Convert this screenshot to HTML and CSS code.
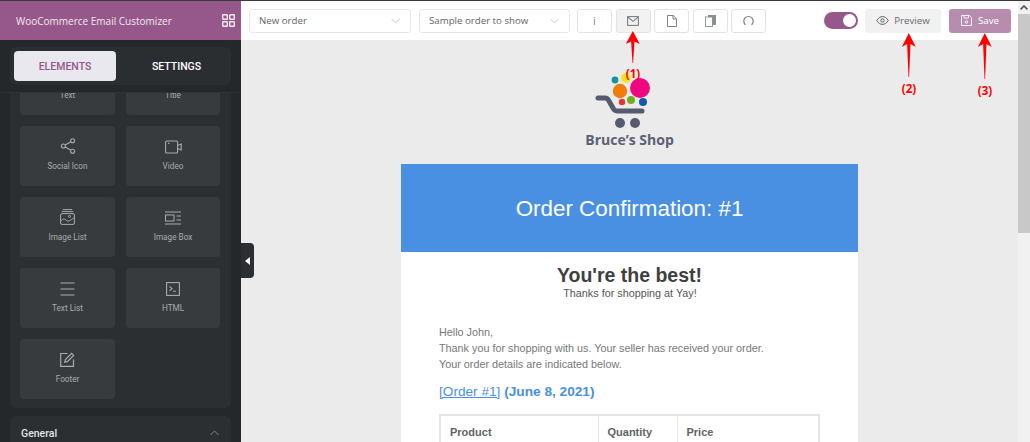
FILE: index.html
```html
<!DOCTYPE html>
<html lang="en">
<head>
  <meta charset="UTF-8">
  <title>WooCommerce Email Customizer</title>
  <link rel="stylesheet" href="styles.css">
</head>
<body>
  <div class="app">
    <aside class="sidebar">
      <div class="brand">
        <span>WooCommerce Email Customizer</span>
        <svg class="brand-icon" width="13" height="13" viewBox="0 0 13 13" fill="none" stroke="#f2e8f0" stroke-width="1.4"><rect x="0.7" y="0.7" width="4.6" height="4.6" rx="0.6"/><rect x="7.7" y="0.7" width="4.6" height="4.6" rx="0.6"/><rect x="0.7" y="7.7" width="4.6" height="4.6" rx="0.6"/><rect x="7.7" y="7.7" width="4.6" height="4.6" rx="0.6"/></svg>
      </div>
      <div class="tabbar">
        <div class="tabs">
          <div class="tab active">ELEMENTS</div>
          <div class="tab">SETTINGS</div>
        </div>
      </div>
      <div class="side-scroll">
        <div class="panel">
          <div class="card"><span>Text</span></div>
          <div class="card"><span>Title</span></div>
          <div class="card">
            <svg width="16" height="16" viewBox="0 0 16 16" fill="none" stroke="#a9abac" stroke-width="1.1"><circle cx="3.4" cy="8" r="2"/><circle cx="12.6" cy="2.8" r="2"/><circle cx="12.6" cy="13.2" r="2"/><path d="M5.2 7 10.8 3.8M5.2 9l5.6 3.2"/></svg>
            <span>Social Icon</span>
          </div>
          <div class="card">
            <svg width="17" height="14" viewBox="0 0 17 14" fill="none" stroke="#a9abac" stroke-width="1.1"><rect x="0.6" y="1" width="12" height="12" rx="1"/><path d="M12.6 5.5 16.2 4v6l-3.6-1.5"/><path d="M3 3.4h1.4"/></svg>
            <span>Video</span>
          </div>
          <div class="card">
            <svg width="15" height="16" viewBox="0 0 15 16" fill="none" stroke="#a9abac" stroke-width="1"><path d="M2.8 0.6h9.4M1.8 2.6h11.4"/><rect x="0.6" y="4.6" width="13.8" height="10.8" rx="1.4"/><path d="M0.8 12c2-2.4 3.6-2.4 5.4-0.8s3.6 0.8 8-2.6"/><circle cx="9.5" cy="7.4" r="1"/></svg>
            <span>Image List</span>
          </div>
          <div class="card">
            <svg width="16" height="14" viewBox="0 0 16 14" fill="none" stroke="#a9abac" stroke-width="1"><path d="M0 1h16M0 13h16M11.5 5h4.5M11.5 9h4.5"/><rect x="0.5" y="4" width="8.5" height="6"/></svg>
            <span>Image Box</span>
          </div>
          <div class="card">
            <svg width="15" height="14" viewBox="0 0 15 14" fill="none" stroke="#a9abac" stroke-width="1.2"><path d="M0.5 1h14M0.5 7h14M0.5 13h14"/></svg>
            <span>Text List</span>
          </div>
          <div class="card">
            <svg width="14" height="14" viewBox="0 0 14 14" fill="none" stroke="#a9abac" stroke-width="1.1"><rect x="0.6" y="0.6" width="12.8" height="12.8"/><path d="M3.5 4.5 6 6.7 3.5 8.9M7 9.3h3"/></svg>
            <span>HTML</span>
          </div>
          <div class="card">
            <svg width="15" height="15" viewBox="0 0 15 15" fill="none" stroke="#a9abac" stroke-width="1.2"><path d="M7.5 1.5H0.7v12.8h12.8V7.5"/><path d="M4.8 10.2 5.4 7.6 11.6 1.4 13.6 3.4 7.4 9.6Z"/></svg>
            <span>Footer</span>
          </div>
        </div>
        <div class="panel-head">
          <span>General</span>
          <svg width="9" height="6" viewBox="0 0 9 6" fill="none" stroke="#85888a" stroke-width="1"><path d="M0.5 5 4.5 1l4 4"/></svg>
        </div>
      </div>
    </aside>

    <main class="main">
      <header class="topbar">
        <div class="select select-event">
          <span>New order</span>
          <svg width="9" height="6" viewBox="0 0 9 6" fill="none" stroke="#c4c6c8" stroke-width="1"><path d="M0.5 1 4.5 5l4-4"/></svg>
        </div>
        <div class="select select-sample">
          <span>Sample order to show</span>
          <svg width="9" height="6" viewBox="0 0 9 6" fill="none" stroke="#c4c6c8" stroke-width="1"><path d="M0.5 1 4.5 5l4-4"/></svg>
        </div>
        <div class="tools">
          <div class="tool"><span class="tool-i">i</span></div>
          <div class="tool tool-on">
            <svg width="12" height="10" viewBox="0 0 12 10" fill="none" stroke="#7d8185" stroke-width="1.1"><rect x="0.6" y="0.6" width="10.8" height="8.8"/><path d="M0.8 1 6 5.4 11.2 1"/></svg>
          </div>
          <div class="tool">
            <svg width="10" height="12" viewBox="0 0 10 12" fill="none" stroke="#7d8185" stroke-width="1"><path d="M0.5 0.5h5.7l3.3 3.3v7.7h-9zM6 0.5v3.5h3.5"/></svg>
          </div>
          <div class="tool">
            <svg width="11" height="12" viewBox="0 0 11 12" fill="#8b8e91" stroke="#7d8185" stroke-width="0.8"><rect x="3.5" y="0.5" width="7" height="9"/><rect x="0.5" y="2" width="7" height="9.5" fill="#fff"/></svg>
          </div>
          <div class="tool">
            <svg width="11" height="11" viewBox="0 0 11 11" fill="none" stroke="#7d8185" stroke-width="1.2"><path d="M2.5 9.8A4.7 4.7 0 1 1 8.5 9.8"/></svg>
          </div>
        </div>
        <div class="actions">
          <div class="toggle"><span class="knob"></span></div>
          <div class="btn btn-preview">
            <svg width="13" height="9" viewBox="0 0 13 9" fill="none" stroke="#5f6367" stroke-width="1"><path d="M0.7 4.5C2.5 1.7 4.4 0.6 6.5 0.6s4 1.1 5.8 3.9c-1.8 2.8-3.7 3.9-5.8 3.9S2.5 7.3 0.7 4.5Z"/><circle cx="6.5" cy="4.5" r="1.7"/></svg>
            <span>Preview</span>
          </div>
          <div class="btn btn-save">
            <svg width="11" height="11" viewBox="0 0 11 11" fill="none" stroke="#fff" stroke-width="0.9"><path d="M0.5 0.5h8l2 2v8h-10z"/><path d="M3 0.5v2.5h4.5V0.5"/><circle cx="5.5" cy="7" r="1.3"/></svg>
            <span>Save</span>
          </div>
        </div>
      </header>

      <div class="canvas">
        <div class="logo">
          <svg width="62" height="60" viewBox="0 0 62 60">
            <circle cx="21" cy="9" r="3.4" fill="#14969e"/>
            <circle cx="32" cy="7" r="5" fill="#f7e21f"/>
            <circle cx="26" cy="20" r="7.2" fill="#f07d0a"/>
            <circle cx="46" cy="17" r="10" fill="#f0067e"/>
            <circle cx="28" cy="31" r="3.2" fill="#e8352f"/>
            <circle cx="37" cy="29" r="4" fill="#6fae1f"/>
            <circle cx="49" cy="31" r="4" fill="#1359a8"/>
            <path d="M4 27h7c2 0 3 1 4 3l4 7c1 2 2 3 4 3h25" fill="none" stroke="#565a6e" stroke-width="5" stroke-linecap="round" stroke-linejoin="round"/>
            <circle cx="26" cy="52" r="5" fill="#565a6e"/>
            <circle cx="41" cy="52" r="5" fill="#565a6e"/>
          </svg>
          <div class="logo-name">Bruce’s Shop</div>
        </div>

        <div class="email">
          <div class="email-head">Order Confirmation: #1</div>
          <div class="thanks">
            <h1>You're the best!</h1>
            <p>Thanks for shopping at Yay!</p>
          </div>
          <div class="email-body">
            <p>Hello John,<br>Thank you for shopping with us. Your seller has received your order.<br>Your order details are indicated below.</p>
            <h2><a href="#">[Order #1]</a> (June 8, 2021)</h2>
            <table class="order-table">
              <tr><th class="col-product">Product</th><th class="col-qty">Quantity</th><th>Price</th></tr>
            </table>
          </div>
        </div>
      </div>
    </main>

    <div class="scrollbar">
      <div class="scroll-up"><svg width="8" height="5" viewBox="0 0 8 5" fill="none" stroke="#505050" stroke-width="1.6"><path d="M0.6 4.4 4 1l3.4 3.4"/></svg></div>
      <div class="scroll-thumb"></div>
    </div>

    <div class="collapse"><span class="collapse-arrow"></span></div>

    <div class="mark mark-1">
      <svg width="14" height="32" viewBox="0 0 14 32"><path d="M7 0 14 13 8.7 10.5 7.3 32H6.7L5.3 10.5 0 13Z" fill="#f00"/></svg>
      <span>(1)</span>
    </div>
    <div class="mark mark-2">
      <svg width="14" height="44" viewBox="0 0 14 44"><path d="M7 0 14 14 8.7 11 7.3 44H6.7L5.3 11 0 14Z" fill="#f00"/></svg>
      <span>(2)</span>
    </div>
    <div class="mark mark-3">
      <svg width="14" height="46" viewBox="0 0 14 46"><path d="M7 0 14 14 8.7 11 7.3 46H6.7L5.3 11 0 14Z" fill="#f00"/></svg>
      <span>(3)</span>
    </div>
  </div>
</body>
</html>
```

FILE: styles.css
```css
* {
  box-sizing: border-box;
}

body {
  margin: 0;
  font-family: 'Roboto', sans-serif;
  overflow: hidden;
}

.app {
  position: relative;
  display: flex;
  width: 1030px;
  height: 442px;
  border-top: 1px solid #3a3a3a;
  overflow: hidden;
  background: #ebebeb;
}

/* sidebar */
.sidebar {
  width: 241px;
  flex-shrink: 0;
  display: flex;
  flex-direction: column;
  background: #24282b;
  overflow: hidden;
}

.brand {
  height: 39px;
  flex-shrink: 0;
  display: flex;
  align-items: center;
  justify-content: space-between;
  padding: 0 6px 0 16px;
  background: #96588a;
  color: #f2e8f0;
  font-family: 'Open Sans', sans-serif;
  font-size: 10px;
}

.tabbar {
  height: 53px;
  flex-shrink: 0;
  padding: 7px 10px 0;
  background: #24282b;
  border-bottom: 1px solid #2f3336;
}

.tabs {
  display: flex;
  height: 38px;
  padding: 4px;
  background: #2b2e31;
  border-radius: 6px;
}

.tab {
  flex: 1;
  display: flex;
  align-items: center;
  justify-content: center;
  padding-left: 10px;
  color: #fff;
  font-size: 10.5px;
  font-weight: 500;
}

.tab.active {
  flex: 0 0 102px;
  height: 30px;
  padding-left: 0;
  background: #e8e8ee;
  border-radius: 4px;
  color: #96588a;
}

.side-scroll {
  flex: 1;
  padding: 0 10px;
  overflow: hidden;
}

.panel {
  display: grid;
  grid-template-columns: 95px 94px;
  grid-auto-rows: 60px;
  gap: 11px;
  margin-top: -38px;
  padding: 0 10px 9px;
  background: #2c2f31;
  border-radius: 6px;
}

.card {
  display: flex;
  flex-direction: column;
  align-items: center;
  justify-content: flex-end;
  gap: 7px;
  padding-bottom: 15px;
  background: #383b3d;
  border-radius: 4px;
  color: #a9abac;
  font-size: 8.2px;
  line-height: 10px;
}

.panel-head {
  display: flex;
  align-items: flex-start;
  justify-content: space-between;
  height: 40px;
  margin-top: 8px;
  padding: 11px 12px 0 11px;
  background: #2c2f31;
  border-radius: 6px 6px 0 0;
  color: #e4e5e6;
  font-size: 10.5px;
  font-weight: 500;
}

.panel-head svg {
  margin-top: 3px;
}

.collapse {
  position: absolute;
  left: 241px;
  top: 242px;
  width: 13px;
  height: 35px;
  display: flex;
  align-items: center;
  justify-content: center;
  background: #2c2f31;
  border-radius: 0 4px 4px 0;
}

.collapse-arrow {
  width: 0;
  height: 0;
  border-top: 4px solid transparent;
  border-bottom: 4px solid transparent;
  border-right: 5px solid #fff;
}

/* top bar */
.main {
  flex: 1;
  display: flex;
  flex-direction: column;
  min-width: 0;
}

.topbar {
  height: 39px;
  flex-shrink: 0;
  display: flex;
  align-items: center;
  padding: 0 7px 0 8px;
  background: #fff;
  font-family: 'Open Sans', sans-serif;
  font-size: 9.7px;
  color: #5f6367;
}

.select {
  display: flex;
  align-items: center;
  justify-content: space-between;
  height: 24px;
  margin-right: 8px;
  padding: 0 10px 0 9px;
  border: 1px solid #e6e7e9;
  border-radius: 3px;
}

.select-event {
  width: 162px;
}

.select-sample {
  width: 151px;
  margin-right: 7px;
}

.tools {
  display: flex;
  gap: 3.5px;
}

.tool {
  width: 35px;
  height: 24px;
  display: flex;
  align-items: center;
  justify-content: center;
  border: 1px solid #e2e3e5;
  border-radius: 3px;
}

.tool-on {
  background: #f2f2f2;
}

.tool-i {
  color: #7d8185;
  font-size: 11px;
}

.actions {
  display: flex;
  align-items: center;
  margin-left: auto;
}

.toggle {
  width: 34px;
  height: 17px;
  margin-right: 7px;
  padding: 2px;
  display: flex;
  justify-content: flex-end;
  background: #96588a;
  border-radius: 9px;
}

.knob {
  width: 13px;
  height: 13px;
  background: #fff;
  border-radius: 50%;
}

.btn {
  display: flex;
  align-items: center;
  justify-content: center;
  gap: 5px;
  height: 24px;
  border-radius: 3px;
}

.btn-preview {
  width: 76px;
  margin-right: 8px;
  background: #f1f1f1;
  color: #66696d;
}

.btn-save {
  width: 62px;
  background: #b88cae;
  color: #fff;
  gap: 6px;
}

/* email preview */
.canvas {
  flex: 1;
  display: flex;
  flex-direction: column;
  align-items: center;
  background: #ebebeb;
}

.logo {
  height: 124px;
  display: flex;
  flex-direction: column;
  align-items: center;
  padding-top: 31px;
}

.logo svg {
  display: block;
  margin-left: -8px;
}

.logo-name {
  color: #5c6075;
  font-family: 'Open Sans', sans-serif;
  font-size: 14px;
  font-weight: 700;
  line-height: 17px;
}

.email {
  width: 457px;
  flex: 1;
  background: #fff;
  font-family: 'Liberation Sans', sans-serif;
}

.email-head {
  height: 88px;
  display: flex;
  align-items: center;
  justify-content: center;
  padding-top: 2px;
  background: #4a90e2;
  color: #fff;
  font-size: 22.4px;
}

.thanks {
  padding-top: 12px;
  text-align: center;
}

.thanks h1 {
  margin: 0;
  color: #3f3f3f;
  font-size: 19.5px;
  line-height: 22px;
}

.thanks p {
  margin: 0 0 0 1px;
  color: #555;
  font-size: 10.8px;
  line-height: 14px;
}

.email-body {
  padding: 24px 38px 0;
  color: #777;
  font-size: 10.8px;
  line-height: 16px;
}

.email-body p {
  margin: 0;
}

.email-body h2 {
  margin: 9px 0 0;
  color: #4a90e2;
  font-size: 13.65px;
  line-height: 21px;
}

.email-body h2 a {
  color: #4a90e2;
  font-weight: 400;
}

.order-table {
  width: 381px;
  margin-top: 12px;
  border-collapse: collapse;
  border: 2px solid #e5e5e5;
}

.order-table th {
  height: 34px;
  padding: 0 9px;
  border-left: 1px solid #e5e5e5;
  color: #636363;
  font-size: 11px;
  text-align: left;
}

.col-product {
  width: 158px;
}

.col-qty {
  width: 79px;
}

/* page scrollbar */
.scrollbar {
  width: 12px;
  flex-shrink: 0;
  background: #f1f1f1;
}

.scroll-up {
  height: 13px;
  display: flex;
  align-items: center;
  justify-content: center;
}

.scroll-thumb {
  height: 219px;
  background: #c8c8c8;
}

/* red annotations */
.mark {
  position: absolute;
  display: flex;
  flex-direction: column;
  align-items: center;
  transform: translateX(-50%);
  color: #f00;
  font-family: 'Open Sans', sans-serif;
  font-size: 11.5px;
  font-weight: 700;
  line-height: 14px;
}

.mark svg {
  display: block;
}

.mark-1 {
  left: 633px;
  top: 30px;
}

.mark-1 span {
  margin-top: 4px;
}

.mark-2 {
  left: 909px;
  top: 32px;
}

.mark-2 span {
  margin-top: 5px;
}

.mark-3 {
  left: 985px;
  top: 32px;
}

.mark-3 span {
  margin-top: 5px;
}
```
